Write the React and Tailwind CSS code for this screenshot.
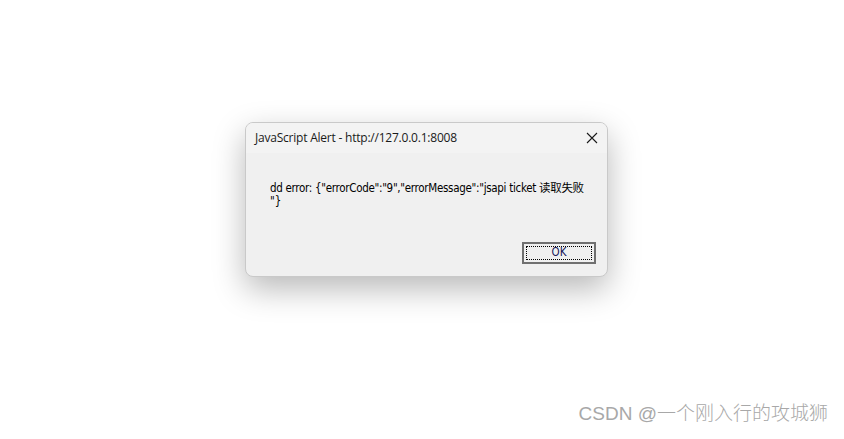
import React from 'react';

const CloseIcon = () => (
  <svg width="12" height="12" viewBox="0 0 12 12" fill="none">
    <path d="M1 1L11 11M11 1L1 11" stroke="#1a1a1a" strokeWidth="1.1" />
  </svg>
);

const App = () => {
  return (
    <div className="w-[844px] h-[439px] bg-white flex flex-col overflow-hidden">
      <div className="pl-[245px] pt-[122px]">
        <div className="w-[363px] h-[155px] rounded-[8px] border border-[#c9c9c9] bg-[#f0f0f0] shadow-[0_12px_32px_rgba(0,0,0,0.28)] flex flex-col overflow-hidden">
          {/* title bar */}
          <div className="h-[30px] bg-[#f3f3f3] flex items-center justify-between pl-[9px] pr-[9px]">
            <span className="text-[12px] text-[#1a1a1a] font-['Open_Sans',sans-serif] tracking-[-0.22px]">
              JavaScript Alert - http://127.0.0.1:8008
            </span>
            <CloseIcon />
          </div>
          {/* message */}
          <div className="flex-1 pl-[24px] pr-[20px] pt-[29px] text-[11.5px] leading-[13px] text-black font-['DejaVu_Sans_Condensed','Liberation_Sans','Noto_Sans_CJK_SC',sans-serif]">
            <div className="tracking-[-0.3px]">dd error: {'{'}"errorCode":"9","errorMessage":"jsapi ticket 读取失败</div>
            <div>"{'}'}</div>
          </div>
          {/* footer */}
          <div className="flex justify-end pr-[11px] pb-[12px]">
            <button className="w-[74px] h-[22px] border-2 border-[#707070] bg-[#f0f0f0] p-[2px] flex">
              <span className="flex-1 border border-dotted border-black flex items-center justify-center text-[11.5px] text-[#1a1a5a] font-['DejaVu_Sans_Condensed',sans-serif]">
                OK
              </span>
            </button>
          </div>
        </div>
      </div>
      <div className="flex justify-end pr-[16px] pt-[126px]">
        <span className="text-[19px] leading-[22px] text-[#a8a8a8] font-light font-['Liberation_Sans','Noto_Sans_CJK_SC',sans-serif]">
          CSDN @一个刚入行的攻城狮
        </span>
      </div>
    </div>
  );
};

export default App;
